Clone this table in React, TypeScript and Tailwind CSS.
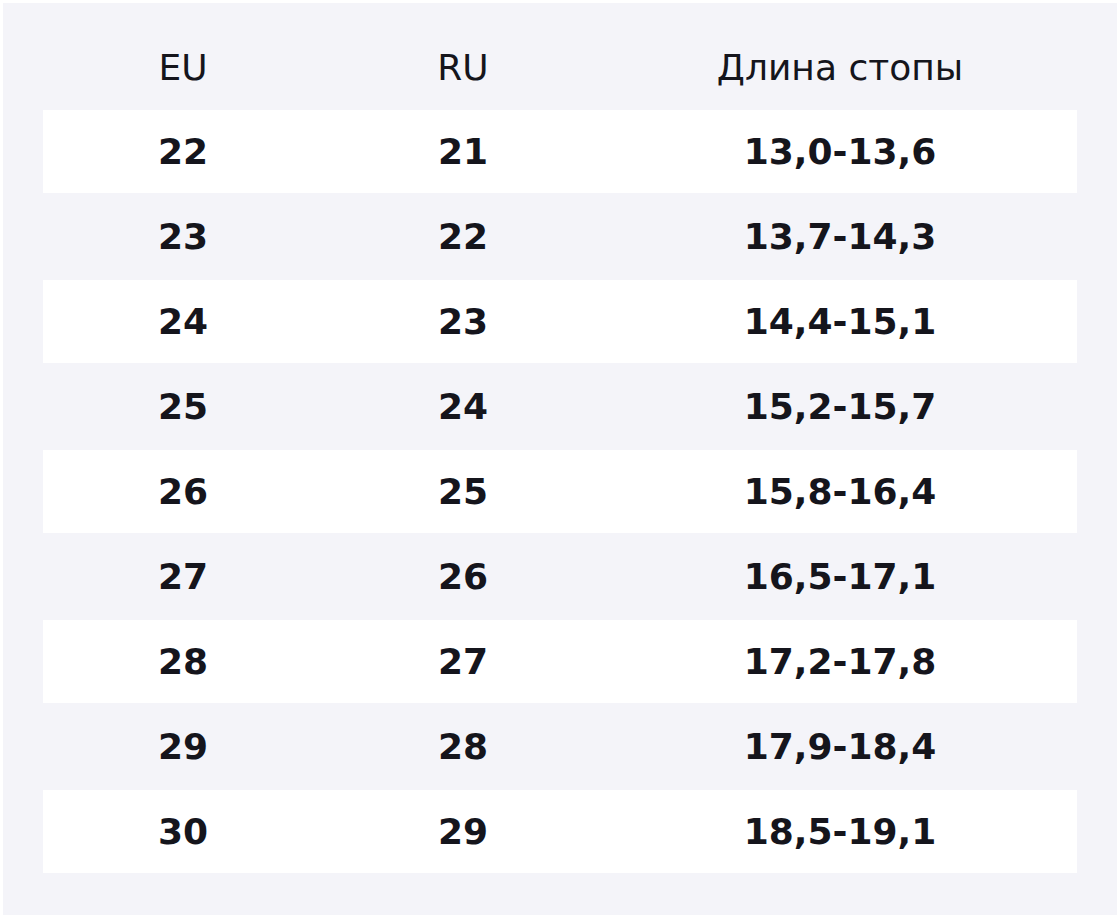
const rows: [string, string, string][] = [
  ["22", "21", "13,0-13,6"],
  ["23", "22", "13,7-14,3"],
  ["24", "23", "14,4-15,1"],
  ["25", "24", "15,2-15,7"],
  ["26", "25", "15,8-16,4"],
  ["27", "26", "16,5-17,1"],
  ["28", "27", "17,2-17,8"],
  ["29", "28", "17,9-18,4"],
  ["30", "29", "18,5-19,1"],
];

export default function App() {
  return (
    <div className="w-[1120px] h-[918px] bg-white p-[3px] font-['DejaVu_Sans',sans-serif] text-[#15151c]">
      <div className="h-full bg-[#f4f4f9] px-[40px] pt-[22px]">
        <div className="grid grid-cols-[280px_280px_1fr] h-[85px] items-center text-center text-[36px]">
          <div>EU</div>
          <div>RU</div>
          <div>Длина стопы</div>
        </div>
        {rows.map((r, i) => (
          <div
            key={r[0]}
            className={
              i % 2 === 0
                ? "grid grid-cols-[280px_280px_1fr] h-[83px] items-center text-center text-[36px] font-bold bg-white"
                : "grid grid-cols-[280px_280px_1fr] h-[87px] items-center text-center text-[36px] font-bold"
            }
          >
            <div>{r[0]}</div>
            <div>{r[1]}</div>
            <div>{r[2]}</div>
          </div>
        ))}
      </div>
    </div>
  );
}
